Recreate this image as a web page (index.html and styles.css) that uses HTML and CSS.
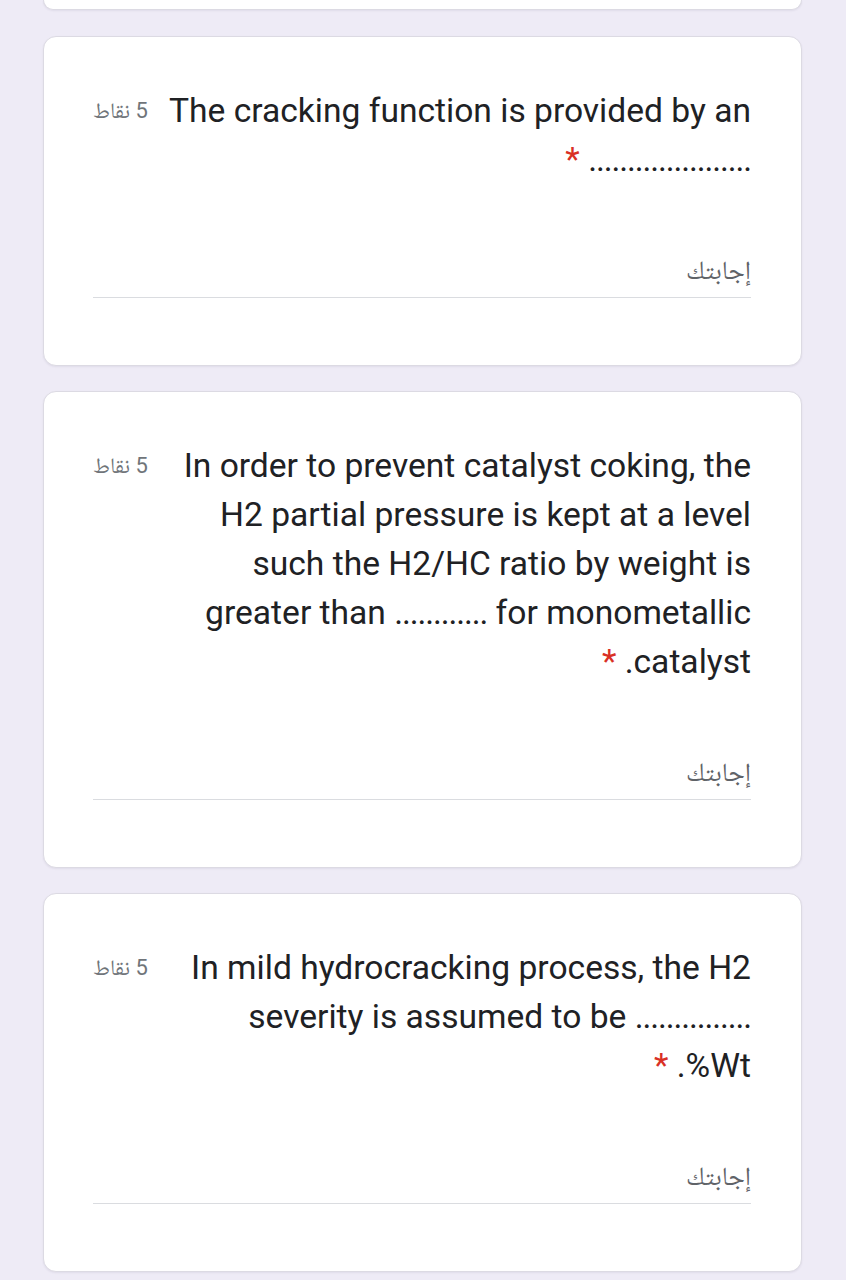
FILE: index.html
```html
<!DOCTYPE html>
<html lang="ar">
<head>
<meta charset="utf-8">
<title>Form</title>
<link rel="stylesheet" href="styles.css">
</head>
<body>
<main class="page">
  <div class="card card-tail"></div>

  <section class="card">
    <div class="q-head">
      <span class="points">5 نقاط</span>
      <div class="q-title">The cracking function is provided by an <span class="nowrap"><span class="req">*</span> <span class="dots">.....................</span></span></div>
    </div>
    <div class="answer"><span class="placeholder">إجابتك</span></div>
  </section>

  <section class="card">
    <div class="q-head">
      <span class="points">5 نقاط</span>
      <div class="q-title">In order to prevent catalyst coking, the H2 partial pressure is kept at a level such the H2/HC ratio by weight is greater than <span class="dots">............</span> for monometallic <span class="nowrap"><span class="req">*</span> .catalyst</span></div>
    </div>
    <div class="answer"><span class="placeholder">إجابتك</span></div>
  </section>

  <section class="card">
    <div class="q-head">
      <span class="points">5 نقاط</span>
      <div class="q-title">In mild hydrocracking process, the H2 severity is assumed to be <span class="dots">...............</span> <span class="nowrap"><span class="req">*</span> .%Wt</span></div>
    </div>
    <div class="answer"><span class="placeholder">إجابتك</span></div>
  </section>
</main>
</body>
</html>
```

FILE: styles.css
```css
html, body {
  margin: 0;
  padding: 0;
}
body {
  background: #eeebf6;
  font-family: Roboto, "Noto Sans", sans-serif;
}
.page {
  display: flex;
  flex-direction: column;
  gap: 25px;
  padding: 0 44px 20px 43px;
}
.card {
  background: #ffffff;
  border: 1px solid #dcdae3;
  border-radius: 13px;
  box-shadow: 0 1px 2px rgba(60, 50, 90, 0.08);
  padding: 49px 50px 67px 49px;
}
.card-tail {
  height: 9px;
  padding: 0;
  border-top: none;
  border-radius: 0 0 13px 13px;
  margin-bottom: 1px;
}
.q-head {
  display: flex;
  align-items: flex-start;
  justify-content: space-between;
}
.points {
  flex: none;
  font-family: Roboto, "Noto Naskh Arabic", "Noto Sans Arabic", "DejaVu Sans", sans-serif;
  font-size: 22px;
  color: #70757a;
  line-height: 49px;
  direction: rtl;
  white-space: nowrap;
}
.q-title {
  flex: 0 0 586px;
  text-align: right;
  font-size: 33.6px;
  line-height: 49px;
  color: #202124;
}
.nowrap {
  white-space: nowrap;
}
.req {
  color: #d93025;
}
.dots {
  letter-spacing: -1.1px;
}
.answer {
  margin-top: 71px;
  padding-bottom: 6px;
  border-bottom: 1px solid #dadce0;
  text-align: right;
}
.placeholder {
  font-family: "Noto Naskh Arabic", "Noto Sans Arabic", "DejaVu Sans", sans-serif;
  font-size: 26px;
  line-height: 36px;
  color: #5f6368;
  direction: rtl;
}
```
